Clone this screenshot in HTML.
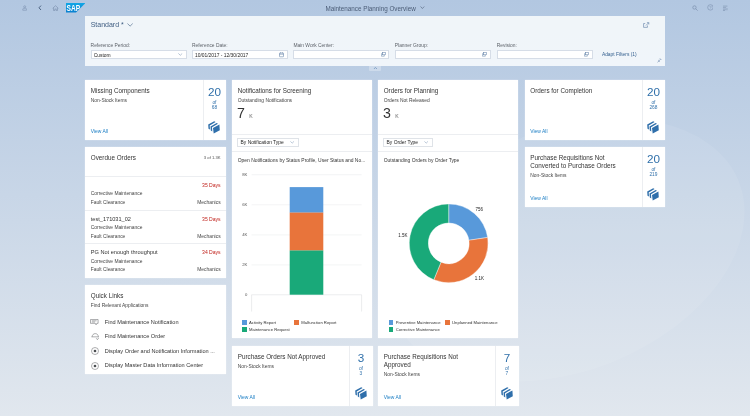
<!DOCTYPE html>
<html lang="en">
<head>
<meta charset="utf-8">
<title>Maintenance Planning Overview</title>
<style>
*{box-sizing:border-box;margin:0;padding:0}
html,body{width:750px;height:416px;overflow:hidden}
body{position:relative;font-family:"Liberation Sans",Arial,sans-serif;color:#333;
 background:linear-gradient(180deg,#b2c7e1 0%,#e1e7ee 100%);}
.abs{position:absolute}
.t{position:absolute;white-space:nowrap;line-height:1}
.shell{position:absolute;left:0;top:0;width:750px;height:16px}
.panel{position:absolute;left:85px;top:16px;width:580px;height:49.5px;background:rgba(246,249,252,.9)}
.card{position:absolute;background:#fff;box-shadow:0 0 1.2px rgba(255,255,255,.55)}
.inp{position:absolute;height:9px;background:#fff;border:1px solid #d6dde7}
.vline{position:absolute;width:1px;background:#eceef1}
.hline{position:absolute;height:1px;background:#eceef1}
</style>
</head>
<body>
<!-- background shapes -->
<svg class="abs" style="left:0;top:0" width="750" height="416" viewBox="0 0 750 416">
 <ellipse cx="567" cy="250" rx="185" ry="121" transform="rotate(-21.75 567 250)" fill="rgba(255,255,255,.08)"/>
</svg>
<div id="cards" style="position:absolute;left:0;top:0;width:750px;height:416px;will-change:transform">
<div class="shell">
 <svg class="abs" style="left:21.8px;top:4.6px" width="5.4" height="6.2" viewBox="0 0 14 15" fill="none" stroke="#7b90ae" stroke-width="1.5">
  <circle cx="7" cy="4" r="2.6"/><path d="M2 13 V10.5 C2 8.6 3.6 8 7 8 S12 8.6 12 10.5 V13 Z"/>
 </svg>
 <svg class="abs" style="left:37.8px;top:5.2px" width="4" height="5.6" viewBox="0 0 10 14" fill="none" stroke="#3f5675" stroke-width="2.2">
  <path d="M7.5 1.5 L2.5 7 L7.5 12.5"/>
 </svg>
 <svg class="abs" style="left:52px;top:4.7px" width="7" height="6.2" viewBox="0 0 16 14" fill="none" stroke="#7b90ae" stroke-width="1.5">
  <path d="M1.5 7.5 L8 1.5 L14.5 7.5"/><path d="M3.5 6.5 V12.5 H6.5 V9 H9.5 V12.5 H12.5 V6.5"/>
 </svg>
 <svg class="abs" style="left:65.6px;top:3.3px" width="19.6" height="9.6" viewBox="0 0 98 48">
  <defs><linearGradient id="sg" x1="0" y1="0" x2="0" y2="1"><stop offset="0" stop-color="#12a7e6"/><stop offset="1" stop-color="#0a7fcf"/></linearGradient></defs>
  <polygon points="0,0 98,0 50,48 0,48" fill="url(#sg)"/>
  <text x="3" y="41" font-family="Liberation Sans, Arial, sans-serif" font-weight="bold" font-size="44" fill="#fff" textLength="68" lengthAdjust="spacingAndGlyphs">SAP</text>
 </svg>
<div class="t" style="left:325.4px;top:6px;font-size:6.3px;color:#4a5c76">Maintenance Planning Overview</div>
 <svg class="abs" style="left:419.8px;top:6.2px" width="4.8" height="3.2" viewBox="0 0 10 7" fill="none" stroke="#4a5c76" stroke-width="1.3"><path d="M1 1.2 L5 5.5 L9 1.2"/></svg>
 <svg class="abs" style="left:691.8px;top:4.8px" width="6.2" height="6.2" viewBox="0 0 14 14" fill="none" stroke="#7b90ae" stroke-width="1.6">
  <circle cx="5.6" cy="5.6" r="3.8"/><path d="M8.5 8.5 L12.8 12.8"/>
 </svg>
 <svg class="abs" style="left:706.6px;top:4.2px" width="6.8" height="6.8" viewBox="0 0 15 15" fill="none" stroke="#7b90ae" stroke-width="1.3">
  <circle cx="7.5" cy="7.5" r="6"/><text x="7.5" y="10.6" text-anchor="middle" font-family="Liberation Sans, Arial, sans-serif" font-size="9" stroke="none" fill="#7b90ae">?</text>
 </svg>
 <svg class="abs" style="left:721.8px;top:4.8px" width="6.4" height="6.2" viewBox="0 0 14 14" fill="none" stroke="#7b90ae" stroke-width="1.4">
  <path d="M2 2.5 H12 M2 6 H9 M2 9.5 H9 M2 12.5 H7"/><path d="M11 7 V12"/>
 </svg>
</div>
<div class="panel"></div>
<div class="t" style="left:90.7px;top:21px;font-size:7px;color:#3f5d80">Standard *</div>
<svg class="abs" style="left:127.2px;top:23.2px" width="6.2" height="3.8" viewBox="0 0 13 8" fill="none" stroke="#3f5d80" stroke-width="1.3"><path d="M1 1.2 L6.5 6.6 L12 1.2"/></svg>
<svg class="abs" style="left:643.4px;top:21.8px" width="6.4" height="6" viewBox="0 0 13 12" fill="none" stroke="#5a7ba3" stroke-width="1.2">
 <path d="M9 7 V10.8 H1.2 V3 H4.5"/><path d="M6 7 L11.6 1.4 M8 1.2 H11.8 V5"/>
</svg>
<div class="t" style="left:90.6px;top:44px;font-size:4.9px;color:#5a5f66">Reference Period:</div>
<div class="inp" style="left:90.6px;top:50px;width:96px"></div>
<div class="t" style="left:192px;top:44px;font-size:4.9px;color:#5a5f66">Reference Date:</div>
<div class="inp" style="left:192px;top:50px;width:96px"></div>
<div class="t" style="left:293.4px;top:44px;font-size:4.9px;color:#5a5f66">Main Work Center:</div>
<div class="inp" style="left:293.4px;top:50px;width:96px"></div>
<div class="t" style="left:394.8px;top:44px;font-size:4.9px;color:#5a5f66">Planner Group:</div>
<div class="inp" style="left:394.8px;top:50px;width:96px"></div>
<div class="t" style="left:496.8px;top:44px;font-size:4.9px;color:#5a5f66">Revision:</div>
<div class="inp" style="left:496.8px;top:50px;width:96px"></div>
<div class="t" style="left:93.8px;top:54px;font-size:4.9px;color:#222">Custom</div>
<div class="t" style="left:195px;top:54px;font-size:4.9px;color:#222">10/01/2017 - 12/30/2017</div>
<svg class="abs" style="left:178.4px;top:53.4px" width="4.6" height="2.8" viewBox="0 0 13 8" fill="none" stroke="#6a87aa" stroke-width="1.4"><path d="M1 1.2 L6.5 6.6 L12 1.2"/></svg>
<svg class="abs" style="left:279px;top:52.4px" width="5" height="5.2" viewBox="0 0 10 10.4" fill="none" stroke="#5a7ba3" stroke-width="1.1"><rect x="1" y="2" width="8" height="7.6" rx=".8"/><path d="M1 4.4 H9 M3 .6 V2.6 M7 .6 V2.6"/></svg>
<svg class="abs" style="left:380.6px;top:52.4px" width="5" height="4.6" viewBox="0 0 10 9.2" fill="none" stroke="#5a7ba3" stroke-width="1"><rect x="3.4" y=".8" width="5.8" height="4.8"/><path d="M3.4 3.4 H.8 V8.4 H6.6 V5.6"/></svg>
<svg class="abs" style="left:482px;top:52.4px" width="5" height="4.6" viewBox="0 0 10 9.2" fill="none" stroke="#5a7ba3" stroke-width="1"><rect x="3.4" y=".8" width="5.8" height="4.8"/><path d="M3.4 3.4 H.8 V8.4 H6.6 V5.6"/></svg>
<svg class="abs" style="left:584.4px;top:52.4px" width="5" height="4.6" viewBox="0 0 10 9.2" fill="none" stroke="#5a7ba3" stroke-width="1"><rect x="3.4" y=".8" width="5.8" height="4.8"/><path d="M3.4 3.4 H.8 V8.4 H6.6 V5.6"/></svg>
<div class="t" style="left:601.9px;top:53px;font-size:4.9px;color:#35608f">Adapt Filters (1)</div>
<svg class="abs" style="left:657.2px;top:57.8px" width="4.8" height="4.8" viewBox="0 0 10 10" fill="none" stroke="#5a7ba3" stroke-width="1.2"><path d="M6 1 L9 4 M7.4 2.6 L4.6 5.2 M2.6 4.4 L5.8 7.6 M4.2 6 L1 9.2"/></svg>
<div class="abs" style="left:369.2px;top:65.5px;width:11.4px;height:5.8px;background:rgba(255,255,255,.28);border-radius:0 0 1px 1px"></div>
<svg class="abs" style="left:372.6px;top:66.6px" width="4.8" height="2.8" viewBox="0 0 13 8" fill="none" stroke="#3f6ea3" stroke-width="1.5"><path d="M1 6.8 L6.5 1.4 L12 6.8"/></svg>
<div class="card" style="left:85px;top:79.6px;width:140.8px;height:60px"></div>
<div class="vline" style="left:203px;top:79.6px;height:60px"></div>
<div class="t" style="left:90.8px;top:88px;font-size:6.3px;color:#333">Missing Components</div>
<div class="t" style="left:90.8px;top:99px;font-size:4.9px;color:#444">Non-Stock Items</div>
<div class="t" style="left:90.8px;top:130px;font-size:4.95px;color:#1a7dc4">View All</div>
<div class="t" style="left:203px;width:22.8px;text-align:center;top:86px;font-size:11.7px;color:#3070aa">20</div>
<div class="t" style="left:203px;width:22.8px;text-align:center;top:101px;font-size:4.8px;color:#3070aa">of</div>
<div class="t" style="left:203px;width:22.8px;text-align:center;top:106px;font-size:4.8px;color:#3070aa">68</div>
<svg class="abs" style="left:208.1px;top:121.0px" width="12" height="12.6" viewBox="0 0 12 12.6">
 <g fill="#2f6fab">
  <polygon points="0.2,3.6 6.2,0.2 7.6,0.9 1.7,4.4 2,8.6 0.5,7.7"/>
  <polygon points="2.5,5.5 8.6,2 10,2.7 4,6.3 4.3,10.5 2.8,9.6"/>
  <polygon points="5,7 11.4,3.4 11.8,9.2 5.7,12.5"/>
 </g>
</svg>
<div class="card" style="left:524.5px;top:79.6px;width:140.5px;height:60px"></div>
<div class="vline" style="left:641.9px;top:79.6px;height:60px"></div>
<div class="t" style="left:530.3px;top:88px;font-size:6.3px;color:#333">Orders for Completion</div>
<div class="t" style="left:530.3px;top:130px;font-size:4.95px;color:#1a7dc4">View All</div>
<div class="t" style="left:641.9px;width:23.1px;text-align:center;top:86px;font-size:11.7px;color:#3070aa">20</div>
<div class="t" style="left:641.9px;width:23.1px;text-align:center;top:101px;font-size:4.8px;color:#3070aa">of</div>
<div class="t" style="left:641.9px;width:23.1px;text-align:center;top:106px;font-size:4.8px;color:#3070aa">268</div>
<svg class="abs" style="left:647.1px;top:121.0px" width="12" height="12.6" viewBox="0 0 12 12.6">
 <g fill="#2f6fab">
  <polygon points="0.2,3.6 6.2,0.2 7.6,0.9 1.7,4.4 2,8.6 0.5,7.7"/>
  <polygon points="2.5,5.5 8.6,2 10,2.7 4,6.3 4.3,10.5 2.8,9.6"/>
  <polygon points="5,7 11.4,3.4 11.8,9.2 5.7,12.5"/>
 </g>
</svg>
<div class="card" style="left:524.5px;top:146.8px;width:140.5px;height:60.2px"></div>
<div class="vline" style="left:641.9px;top:146.8px;height:60.2px"></div>
<div class="t" style="left:530.3px;top:155px;font-size:6.3px;color:#333">Purchase Requisitions Not</div>
<div class="t" style="left:530.3px;top:163px;font-size:6.3px;color:#333">Converted to Purchase Orders</div>
<div class="t" style="left:530.3px;top:174px;font-size:4.9px;color:#444">Non-Stock Items</div>
<div class="t" style="left:530.3px;top:197px;font-size:4.95px;color:#1a7dc4">View All</div>
<div class="t" style="left:641.9px;width:23.1px;text-align:center;top:153px;font-size:11.7px;color:#3070aa">20</div>
<div class="t" style="left:641.9px;width:23.1px;text-align:center;top:168px;font-size:4.8px;color:#3070aa">of</div>
<div class="t" style="left:641.9px;width:23.1px;text-align:center;top:173px;font-size:4.8px;color:#3070aa">219</div>
<svg class="abs" style="left:647.1px;top:188.2px" width="12" height="12.6" viewBox="0 0 12 12.6">
 <g fill="#2f6fab">
  <polygon points="0.2,3.6 6.2,0.2 7.6,0.9 1.7,4.4 2,8.6 0.5,7.7"/>
  <polygon points="2.5,5.5 8.6,2 10,2.7 4,6.3 4.3,10.5 2.8,9.6"/>
  <polygon points="5,7 11.4,3.4 11.8,9.2 5.7,12.5"/>
 </g>
</svg>
<div class="card" style="left:232px;top:345.6px;width:140.5px;height:60.2px"></div>
<div class="vline" style="left:349.4px;top:345.6px;height:60.2px"></div>
<div class="t" style="left:237.8px;top:354px;font-size:6.3px;color:#333">Purchase Orders Not Approved</div>
<div class="t" style="left:237.8px;top:365px;font-size:4.9px;color:#444">Non-Stock Items</div>
<div class="t" style="left:237.8px;top:396px;font-size:4.95px;color:#1a7dc4">View All</div>
<div class="t" style="left:349.4px;width:23.1px;text-align:center;top:352px;font-size:11.7px;color:#3070aa">3</div>
<div class="t" style="left:349.4px;width:23.1px;text-align:center;top:367px;font-size:4.8px;color:#3070aa">of</div>
<div class="t" style="left:349.4px;width:23.1px;text-align:center;top:372px;font-size:4.8px;color:#3070aa">3</div>
<svg class="abs" style="left:354.6px;top:387.0px" width="12" height="12.6" viewBox="0 0 12 12.6">
 <g fill="#2f6fab">
  <polygon points="0.2,3.6 6.2,0.2 7.6,0.9 1.7,4.4 2,8.6 0.5,7.7"/>
  <polygon points="2.5,5.5 8.6,2 10,2.7 4,6.3 4.3,10.5 2.8,9.6"/>
  <polygon points="5,7 11.4,3.4 11.8,9.2 5.7,12.5"/>
 </g>
</svg>
<div class="card" style="left:378px;top:345.6px;width:140.5px;height:60.2px"></div>
<div class="vline" style="left:495.4px;top:345.6px;height:60.2px"></div>
<div class="t" style="left:383.8px;top:354px;font-size:6.3px;color:#333">Purchase Requisitions Not</div>
<div class="t" style="left:383.8px;top:362px;font-size:6.3px;color:#333">Approved</div>
<div class="t" style="left:383.8px;top:373px;font-size:4.9px;color:#444">Non-Stock Items</div>
<div class="t" style="left:383.8px;top:396px;font-size:4.95px;color:#1a7dc4">View All</div>
<div class="t" style="left:495.4px;width:23.1px;text-align:center;top:352px;font-size:11.7px;color:#3070aa">7</div>
<div class="t" style="left:495.4px;width:23.1px;text-align:center;top:367px;font-size:4.8px;color:#3070aa">of</div>
<div class="t" style="left:495.4px;width:23.1px;text-align:center;top:372px;font-size:4.8px;color:#3070aa">7</div>
<svg class="abs" style="left:500.6px;top:387.0px" width="12" height="12.6" viewBox="0 0 12 12.6">
 <g fill="#2f6fab">
  <polygon points="0.2,3.6 6.2,0.2 7.6,0.9 1.7,4.4 2,8.6 0.5,7.7"/>
  <polygon points="2.5,5.5 8.6,2 10,2.7 4,6.3 4.3,10.5 2.8,9.6"/>
  <polygon points="5,7 11.4,3.4 11.8,9.2 5.7,12.5"/>
 </g>
</svg>
<div class="card" style="left:85px;top:147px;width:140.8px;height:131px"></div>
<div class="t" style="left:90.8px;top:155px;font-size:6.3px;color:#333">Overdue Orders</div>
<div class="t" style="right:529.4px;top:156px;font-size:4.2px;color:#555">3 of 1.3K</div>
<div class="hline" style="left:85px;top:176px;width:140.8px"></div>
<div class="t" style="right:529.4px;top:183px;font-size:5.05px;color:#c0211b">35 Days</div>
<div class="t" style="left:90.8px;top:192px;font-size:4.9px;color:#444">Corrective Maintenance</div>
<div class="t" style="left:90.8px;top:201px;font-size:4.9px;color:#444">Fault Clearance</div>
<div class="t" style="right:529.4px;top:201px;font-size:4.9px;color:#444">Mechanics</div>
<div class="hline" style="left:85px;top:209.6px;width:140.8px"></div>
<div class="t" style="left:90.8px;top:217px;font-size:5.6px;color:#333">test_171031_02</div>
<div class="t" style="right:529.4px;top:217px;font-size:5.05px;color:#c0211b">35 Days</div>
<div class="t" style="left:90.8px;top:226px;font-size:4.9px;color:#444">Corrective Maintenance</div>
<div class="t" style="left:90.8px;top:235px;font-size:4.9px;color:#444">Fault Clearance</div>
<div class="t" style="right:529.4px;top:235px;font-size:4.9px;color:#444">Mechanics</div>
<div class="hline" style="left:85px;top:243.2px;width:140.8px"></div>
<div class="t" style="left:90.8px;top:250px;font-size:5.6px;color:#333">PG Not enough throughput</div>
<div class="t" style="right:529.4px;top:250px;font-size:5.05px;color:#c0211b">34 Days</div>
<div class="t" style="left:90.8px;top:260px;font-size:4.9px;color:#444">Corrective Maintenance</div>
<div class="t" style="left:90.8px;top:268px;font-size:4.9px;color:#444">Fault Clearance</div>
<div class="t" style="right:529.4px;top:268px;font-size:4.9px;color:#444">Mechanics</div>
<div class="card" style="left:85px;top:284.8px;width:140.8px;height:89.2px"></div>
<div class="t" style="left:90.8px;top:293px;font-size:6.3px;color:#333">Quick Links</div>
<div class="t" style="left:90.8px;top:304px;font-size:4.9px;color:#444">Find Relevant Applications</div>
<div class="t" style="left:104.8px;top:320px;font-size:5.6px;color:#333">Find Maintenance Notification</div>
<div class="t" style="left:104.8px;top:334px;font-size:5.6px;color:#333">Find Maintenance Order</div>
<div class="t" style="left:104.8px;top:349px;font-size:5.6px;color:#333">Display Order and Notification Information ...</div>
<div class="t" style="left:104.8px;top:363px;font-size:5.6px;color:#333">Display Master Data Information Center</div>
<svg class="abs" style="left:90.4px;top:319px" width="8.6" height="6.6" viewBox="0 0 17 13" fill="none" stroke="#6a6d70" stroke-width="1.1"><path d="M1 1 H16 V8.6 H13.4 L12 11.6 L10.6 8.6 H1 Z"/><path d="M3.6 3.6 H13 M3.6 6 H10"/></svg>
<svg class="abs" style="left:90.8px;top:332.8px" width="8.6" height="7.6" viewBox="0 0 17 15" fill="none" stroke="#6a6d70" stroke-width="1.1"><path d="M2.4 7.4 C2.4 3.6 5 1.2 8.4 1.2 S14.4 3.6 14.4 7.4"/><path d="M0.8 7.6 H16"/><path d="M10.4 10.4 L12.6 13.2 L15.4 9.6"/></svg>
<svg class="abs" style="left:91px;top:347.4px" width="8" height="8" viewBox="0 0 16 16" fill="none" stroke="#6a6d70" stroke-width="1.1"><circle cx="8" cy="8" r="7"/><circle cx="8" cy="8" r="2.7" fill="#4a4d50" stroke="none"/></svg>
<svg class="abs" style="left:91px;top:361.6px" width="8" height="8" viewBox="0 0 16 16" fill="none" stroke="#6a6d70" stroke-width="1.1"><circle cx="8" cy="8" r="7"/><circle cx="8" cy="8" r="2.7" fill="#4a4d50" stroke="none"/></svg>
<div class="card" style="left:231.8px;top:79.6px;width:140.4px;height:258px"></div>
<div class="t" style="left:237.7px;top:88px;font-size:6.3px;color:#333">Notifications for Screening</div>
<div class="t" style="left:237.7px;top:99px;font-size:4.9px;color:#444">Outstanding Notifications</div>
<div class="t" style="left:237.1px;top:106px;font-size:14.2px;color:#333">7</div>
<div class="t" style="left:249.3px;top:114px;font-size:5.2px;color:#666">K</div>
<div class="hline" style="left:231.8px;top:134px;width:140.4px"></div>
<div class="abs" style="left:237.0px;top:138px;width:61.7px;height:9px;background:#fff;border:1px solid #dfe3e8"></div>
<div class="t" style="left:240.6px;top:141px;font-size:4.9px;color:#222">By Notification Type</div>
<svg class="abs" style="left:290.1px;top:141.4px" width="4.4" height="2.6" viewBox="0 0 13 8" fill="none" stroke="#6a87aa" stroke-width="1.4"><path d="M1 1.2 L6.5 6.6 L12 1.2"/></svg>
<div class="hline" style="left:231.8px;top:151px;width:140.4px"></div>
<div class="t" style="left:237.7px;top:159px;font-size:4.95px;color:#333">Open Notifications by Status Profile, User Status and No...</div>
<svg class="abs" style="left:231.8px;top:165px" width="140.4" height="150" viewBox="231.8 165 140.4 150">
 <line x1="251.4" x2="361.4" y1="174.7" y2="174.7" stroke="#e6e8ea" stroke-width=".5"/>
 <line x1="251.4" x2="361.4" y1="204.8" y2="204.8" stroke="#e6e8ea" stroke-width=".5"/>
 <line x1="251.4" x2="361.4" y1="234.9" y2="234.9" stroke="#e6e8ea" stroke-width=".5"/>
 <line x1="251.4" x2="361.4" y1="264.9" y2="264.9" stroke="#e6e8ea" stroke-width=".5"/>
 <path d="M251.4 311.6 V294.8 H361.4 V311.6" fill="none" stroke="#d8dadc" stroke-width=".5"/>
 <rect x="289.5" y="187.1" width="33.6" height="25.6" fill="#5899da"/>
 <rect x="289.5" y="212.6" width="33.6" height="38" fill="#e8743b"/>
 <rect x="289.5" y="250.5" width="33.6" height="44.2" fill="#19a979"/>
 <text x="247.2" y="176.2" text-anchor="end" font-family="Liberation Sans, Arial, sans-serif" font-size="4.2" fill="#555">8K</text>
 <text x="247.2" y="206.3" text-anchor="end" font-family="Liberation Sans, Arial, sans-serif" font-size="4.2" fill="#555">6K</text>
 <text x="247.2" y="236.4" text-anchor="end" font-family="Liberation Sans, Arial, sans-serif" font-size="4.2" fill="#555">4K</text>
 <text x="247.2" y="266.4" text-anchor="end" font-family="Liberation Sans, Arial, sans-serif" font-size="4.2" fill="#555">2K</text>
 <text x="247.2" y="296.3" text-anchor="end" font-family="Liberation Sans, Arial, sans-serif" font-size="4.2" fill="#555">0</text>
</svg>
<div class="abs" style="left:241.9px;top:319.7px;width:4.8px;height:4.9px;background:#5899da"></div>
<div class="t" style="left:249.0px;top:321px;font-size:4.2px;color:#333">Activity Report</div>
<div class="abs" style="left:294.2px;top:319.7px;width:4.8px;height:4.9px;background:#e8743b"></div>
<div class="t" style="left:301.3px;top:321px;font-size:4.2px;color:#333">Malfunction Report</div>
<div class="abs" style="left:241.9px;top:327.2px;width:4.8px;height:4.9px;background:#19a979"></div>
<div class="t" style="left:249.0px;top:328px;font-size:4.2px;color:#333">Maintenance Request</div>
<div class="card" style="left:377.8px;top:79.6px;width:140.4px;height:258px"></div>
<div class="t" style="left:383.7px;top:88px;font-size:6.3px;color:#333">Orders for Planning</div>
<div class="t" style="left:383.7px;top:99px;font-size:4.9px;color:#444">Orders Not Released</div>
<div class="t" style="left:383.1px;top:106px;font-size:14.2px;color:#333">3</div>
<div class="t" style="left:395.3px;top:114px;font-size:5.2px;color:#666">K</div>
<div class="hline" style="left:377.8px;top:134px;width:140.4px"></div>
<div class="abs" style="left:383.0px;top:138px;width:49.7px;height:9px;background:#fff;border:1px solid #dfe3e8"></div>
<div class="t" style="left:386.6px;top:141px;font-size:4.9px;color:#222">By Order Type</div>
<svg class="abs" style="left:424.1px;top:141.4px" width="4.4" height="2.6" viewBox="0 0 13 8" fill="none" stroke="#6a87aa" stroke-width="1.4"><path d="M1 1.2 L6.5 6.6 L12 1.2"/></svg>
<div class="hline" style="left:377.8px;top:151px;width:140.4px"></div>
<div class="t" style="left:383.7px;top:159px;font-size:4.95px;color:#333">Outstanding Orders by Order Type</div>
<svg class="abs" style="left:377.8px;top:165px" width="140.4" height="150" viewBox="377.8 165 140.4 150">
 <path d="M448.50 203.90 A39.4 39.4 0 0 1 487.47 237.48 L468.68 240.28 A20.4 20.4 0 0 0 448.50 222.90 Z" fill="#5899da" stroke="#fff" stroke-width=".4"/>
 <path d="M487.47 237.48 A39.4 39.4 0 0 1 433.61 279.78 L440.79 262.19 A20.4 20.4 0 0 0 468.68 240.28 Z" fill="#e8743b" stroke="#fff" stroke-width=".4"/>
 <path d="M433.61 279.78 A39.4 39.4 0 0 1 448.50 203.90 L448.50 222.90 A20.4 20.4 0 0 0 440.79 262.19 Z" fill="#19a979" stroke="#fff" stroke-width=".4"/>
 <text x="475.4" y="211.2" text-anchor="start" font-family="Liberation Sans, Arial, sans-serif" font-size="4.5" fill="#222">756</text>
 <text x="407.3" y="237.2" text-anchor="end" font-family="Liberation Sans, Arial, sans-serif" font-size="4.5" fill="#222">1.5K</text>
 <text x="474.5" y="280.1" text-anchor="start" font-family="Liberation Sans, Arial, sans-serif" font-size="4.5" fill="#222">1.1K</text>
</svg>
<div class="abs" style="left:388.6px;top:319.7px;width:4.8px;height:4.9px;background:#5899da"></div>
<div class="t" style="left:395.7px;top:321px;font-size:4.2px;color:#333">Preventive Maintenance</div>
<div class="abs" style="left:445px;top:319.7px;width:4.8px;height:4.9px;background:#e8743b"></div>
<div class="t" style="left:452.1px;top:321px;font-size:4.2px;color:#333">Unplanned Maintenance</div>
<div class="abs" style="left:388.6px;top:327.2px;width:4.8px;height:4.9px;background:#19a979"></div>
<div class="t" style="left:395.7px;top:328px;font-size:4.2px;color:#333">Corrective Maintenance</div>
</div>
</body>
</html>
